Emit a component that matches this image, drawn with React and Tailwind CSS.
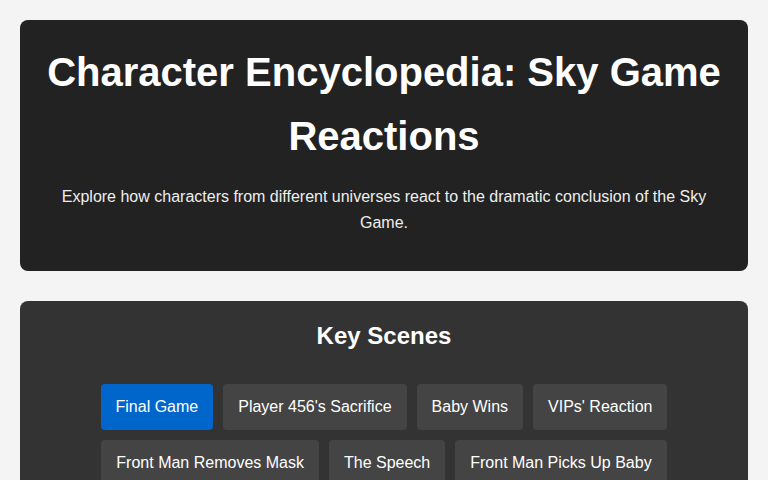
import React, { useState } from 'react';

const scenes = [
    'Final Game',
    "Player 456's Sacrifice",
    'Baby Wins',
    "VIPs' Reaction",
    'Front Man Removes Mask',
    'The Speech',
    'Front Man Picks Up Baby',
];

const App = () => {
    const [active, setActive] = useState(0);

    return (
        <div className="min-h-screen bg-[#f4f4f4] p-5 font-['Liberation_Sans',Arial,sans-serif] text-[#eee]">
            {/* Header */}
            <header className="bg-[#222] rounded-lg p-5 text-center">
                <h1 className="text-[40px] leading-[64px] font-bold text-white mb-4">
                    Character Encyclopedia: Sky Game Reactions
                </h1>
                <p className="text-base leading-[25.6px] mb-4">
                    Explore how characters from different universes react to the dramatic conclusion of the Sky Game.
                </p>
            </header>

            {/* Scenes */}
            <section className="bg-[#333] rounded-lg p-5 mt-[30px] text-center">
                <h2 className="text-2xl leading-[29px] font-bold text-white">Key Scenes</h2>
                <div className="flex flex-wrap justify-center gap-[10px] mt-[34px]">
                    {scenes.map((s, i) => (
                        <button
                            key={s}
                            onClick={() => setActive(i)}
                            className={`px-[15px] py-[10px] rounded text-base leading-[25.6px] text-white ${i === active ? 'bg-[#0066cc]' : 'bg-[#444]'}`}
                        >
                            {s}
                        </button>
                    ))}
                </div>
            </section>
        </div>
    );
};

export default App;
